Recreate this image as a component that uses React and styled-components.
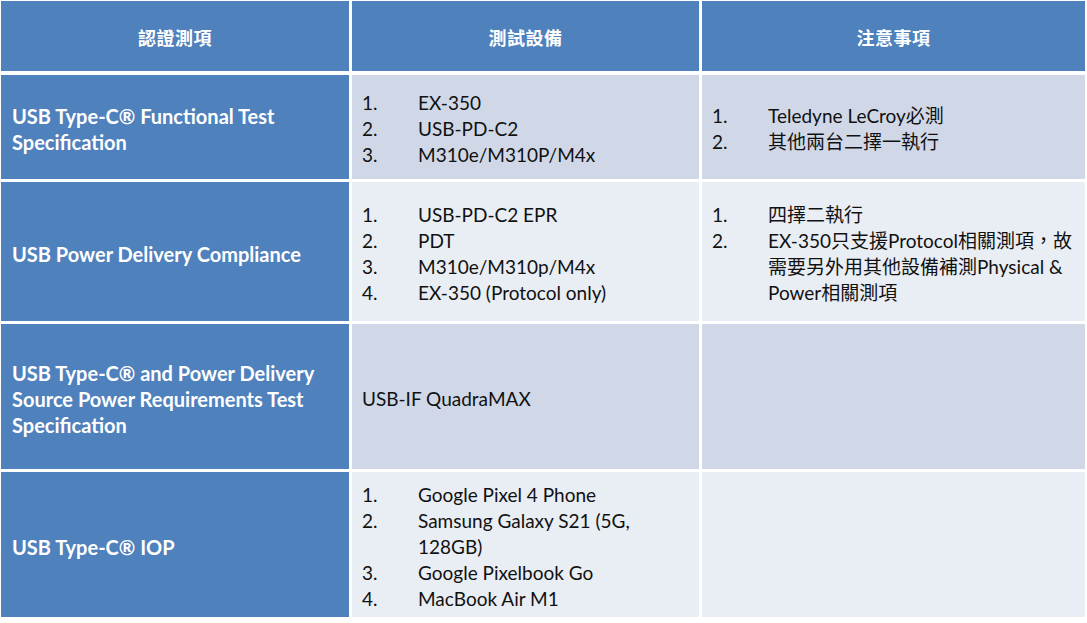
import React from 'react'
import styled, { createGlobalStyle } from 'styled-components'

const colors = {
  blue: '#4f81bd',
  bandDark: '#d0d8e8',
  bandLight: '#e9edf4',
  text: '#111111',
  white: '#ffffff',
}

const fontStack = `Lato, "Noto Sans CJK TC", "Noto Sans CJK SC", sans-serif`

const GlobalStyle = createGlobalStyle`
  html, body {
    margin: 0;
    padding: 0;
    background: ${colors.white};
  }
  body {
    font-family: ${fontStack};
    -webkit-font-smoothing: antialiased;
  }
`

const rows = [
  {
    item: ['USB Type-C® Functional Test', 'Specification'],
    equipment: [['EX-350'], ['USB-PD-C2'], ['M310e/M310P/M4x']],
    notes: [['Teledyne LeCroy必測'], ['其他兩台二擇一執行']],
    height: 104,
    band: 'dark',
  },
  {
    item: ['USB Power Delivery Compliance'],
    equipment: [['USB-PD-C2 EPR'], ['PDT'], ['M310e/M310p/M4x'], ['EX-350 (Protocol only)']],
    notes: [
      ['四擇二執行'],
      ['EX-350只支援Protocol相關測項，故', '需要另外用其他設備補測Physical &', 'Power相關測項'],
    ],
    height: 139,
    band: 'light',
  },
  {
    item: ['USB Type-C® and Power Delivery', 'Source Power Requirements Test', 'Specification'],
    plain: 'USB-IF QuadraMAX',
    notes: [],
    height: 145,
    band: 'dark',
  },
  {
    item: ['USB Type-C® IOP'],
    equipment: [
      ['Google Pixel 4 Phone'],
      ['Samsung Galaxy S21 (5G,', '128GB)'],
      ['Google Pixelbook Go'],
      ['MacBook Air M1'],
    ],
    notes: [],
    height: 145,
    band: 'light',
  },
]

const NumberedList = ({ items }) => (
  <List>
    {items.map((lines, i) => (
      <ListItem key={i}>
        <Num>{i + 1}.</Num>
        <ItemText>
          {lines.map((l, j) => (
            <span key={j}>{l}</span>
          ))}
        </ItemText>
      </ListItem>
    ))}
  </List>
)

const App = () => {
  return (
    <>
      <GlobalStyle />
      <Page>
        <Table $rows={rows.map(r => r.height)}>
          <HeadCell>認證測項</HeadCell>
          <HeadCell>測試設備</HeadCell>
          <HeadCell>注意事項</HeadCell>
          {rows.map((row, i) => (
            <React.Fragment key={i}>
              <ItemCell>
                {row.item.map((l, j) => (
                  <span key={j}>{l}</span>
                ))}
              </ItemCell>
              <DataCell $band={row.band}>
                {row.plain ? <PlainText>{row.plain}</PlainText> : <NumberedList items={row.equipment} />}
              </DataCell>
              <DataCell $band={row.band}>
                {row.notes.length > 0 && <NumberedList items={row.notes} />}
              </DataCell>
            </React.Fragment>
          ))}
        </Table>
      </Page>
    </>
  )
}

const Page = styled.div`
  padding: 1px 0 0 1px;
  width: 1087px;
  height: 623px;
  box-sizing: border-box;
  overflow: hidden;
`

const Table = styled.div`
  display: grid;
  grid-template-columns: 348px 347px 383px;
  grid-template-rows: 71px ${p => p.$rows.map(h => `${h}px`).join(' ')};
  column-gap: 3px;
  row-gap: 3px;
  & > :nth-child(-n + 3) {
    margin-bottom: 1px;
  }
`

const HeadCell = styled.div`
  background: ${colors.blue};
  color: ${colors.white};
  font-weight: 700;
  font-size: 18px;
  display: flex;
  align-items: center;
  justify-content: center;
  padding-top: 2px;
  letter-spacing: 0.5px;
`

const ItemCell = styled.div`
  background: ${colors.blue};
  color: ${colors.white};
  font-weight: 700;
  font-size: 20px;
  line-height: 26px;
  padding: 4px 8px 0 11px;
  display: flex;
  flex-direction: column;
  justify-content: center;
`

const DataCell = styled.div`
  background: ${p => (p.$band === 'dark' ? colors.bandDark : colors.bandLight)};
  color: ${colors.text};
  font-size: 19px;
  line-height: 26px;
  padding: 4px 6px 0 10px;
  display: flex;
  flex-direction: column;
  justify-content: center;
`

const List = styled.div`
  display: flex;
  flex-direction: column;
`

const ListItem = styled.div`
  display: grid;
  grid-template-columns: 56px 1fr;
`

const Num = styled.span``

const ItemText = styled.span`
  display: flex;
  flex-direction: column;
  white-space: nowrap;
`

const PlainText = styled.span`
  white-space: nowrap;
`

export default App
